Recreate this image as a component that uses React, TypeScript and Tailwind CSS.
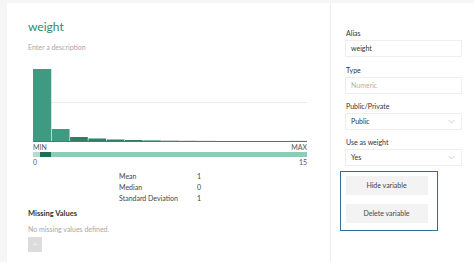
import React from "react";

const bins = [72, 12, 4, 2.5, 1.5, 1, 0.6, 0.3, 0.2, 0.1, 0, 0, 0, 0, 0.1];

function Histogram() {
  const w = 274;
  const h = 74;
  const bw = w / 15;
  return (
    <svg width={w} height={h} className="block">
      <line x1={0} x2={w} y1={34.5} y2={34.5} stroke="#ebebeb" strokeWidth={1} />
      {bins.map((v, i) =>
        v > 0 ? (
          <rect
            key={i}
            x={i * bw + (i > 0 ? 0.6 : 0)}
            y={73 - v}
            width={bw - (i > 0 ? 0.6 : 0)}
            height={v}
            fill={i < 2 ? "#3e9a80" : "#2f7f68"}
          />
        ) : null
      )}
      <line x1={0} x2={w} y1={73.5} y2={73.5} stroke="#6b6b6b" strokeWidth={1} />
    </svg>
  );
}

function Chevron() {
  return (
    <svg width="7" height="5" viewBox="0 0 7 5" className="block">
      <path d="M0.5 1 L3.5 4 L6.5 1" fill="none" stroke="#c4c4c4" strokeWidth="0.8" />
    </svg>
  );
}

export default function App() {
  const font = { fontFamily: "Lato, 'Noto Sans', sans-serif" };
  return (
    <div
      className="w-[474px] h-[262px] overflow-hidden bg-[#f6f6f6] flex pt-[3px] pl-[7px]"
      style={font}
    >
      <div className="w-[324px] h-[259px] bg-white border-r border-[#ededed] pl-[21px] flex flex-col">
        <div className="mt-[17px] text-[12px] leading-[14px] text-[#2d8a70]">weight</div>
        <div className="mt-[8.5px] text-[7px] leading-[9px] text-[#a8a8a8]">Enter a description</div>
        <div className="ml-[5px] w-[274px] mt-[16.5px] flex flex-col">
          <Histogram />
          <div className="flex justify-between text-[7px] leading-[8px] text-[#555] mt-[1px]">
            <span>MIN</span>
            <span>MAX</span>
          </div>
          <div className="h-[5px] mt-[1px] bg-[#92cab8] flex">
            <div className="w-[7px] bg-[#b9d9cf]" />
            <div className="w-[11px] bg-[#1e6d56]" />
          </div>
          <div className="flex justify-between text-[7px] leading-[8px] text-[#555] mt-[1px]">
            <span>0</span>
            <span>15</span>
          </div>
          <div className="ml-[86px] mt-[4.5px] flex flex-col text-[7px] leading-[11px] text-[#444]">
            <div className="flex"><span className="w-[78px]">Mean</span><span>1</span></div>
            <div className="flex"><span className="w-[78px]">Median</span><span>0</span></div>
            <div className="flex"><span className="w-[78px]">Standard Deviation</span><span>1</span></div>
          </div>
        </div>
        <div className="mt-[5px] text-[7.5px] leading-[9px] font-bold text-[#333]">Missing Values</div>
        <div className="mt-[7px] text-[7px] leading-[9px] text-[#a8a8a8]">No missing values defined.</div>
        <div className="mt-[3px] w-[14px] h-[15px] bg-[#dcdcdc] flex items-center justify-center text-[8px] leading-none text-[#f2f2f2]">
          +
        </div>
      </div>
      <div className="flex-1 bg-white pl-[14px] pt-[26px] flex flex-col">
        <div className="text-[7px] leading-[8px] text-[#333] pl-[1px]">Alias</div>
        <div className="mt-[3px] w-[117px] h-[17px] border border-[#eeeeee] flex items-center pl-[5px] text-[7px] text-[#333]">
          weight
        </div>
        <div className="mt-[9px] text-[7px] leading-[8px] text-[#333] pl-[1px]">Type</div>
        <div className="mt-[3px] w-[117px] h-[17px] border border-[#eeeeee] flex items-center pl-[5px] text-[7px] text-[#b0b0b0]">
          Numeric
        </div>
        <div className="mt-[8px] text-[7px] leading-[8px] text-[#333] pl-[1px]">Public/Private</div>
        <div className="mt-[3px] w-[117px] h-[17px] border border-[#eeeeee] flex items-center justify-between pl-[5px] pr-[6px] text-[7px] text-[#333]">
          <span>Public</span>
          <Chevron />
        </div>
        <div className="mt-[8px] text-[7px] leading-[8px] text-[#333] pl-[1px]">Use as weight</div>
        <div className="mt-[3px] w-[117px] h-[17px] border border-[#eeeeee] flex items-center justify-between pl-[5px] pr-[6px] text-[7px] text-[#333]">
          <span>Yes</span>
          <Chevron />
        </div>
        <div className="mt-[5px] -ml-[5px] w-[98px] h-[60px] border-[1.5px] border-[#2e6e9c] pt-[3.5px] pl-[4.5px] flex flex-col gap-[9px]">
          <div className="w-[82px] h-[19px] bg-[#f3f3f3] flex items-center justify-center text-[7px] text-[#444]">
            Hide variable
          </div>
          <div className="w-[82px] h-[19px] bg-[#f3f3f3] flex items-center justify-center text-[7px] text-[#444]">
            Delete variable
          </div>
        </div>
      </div>
    </div>
  );
}
